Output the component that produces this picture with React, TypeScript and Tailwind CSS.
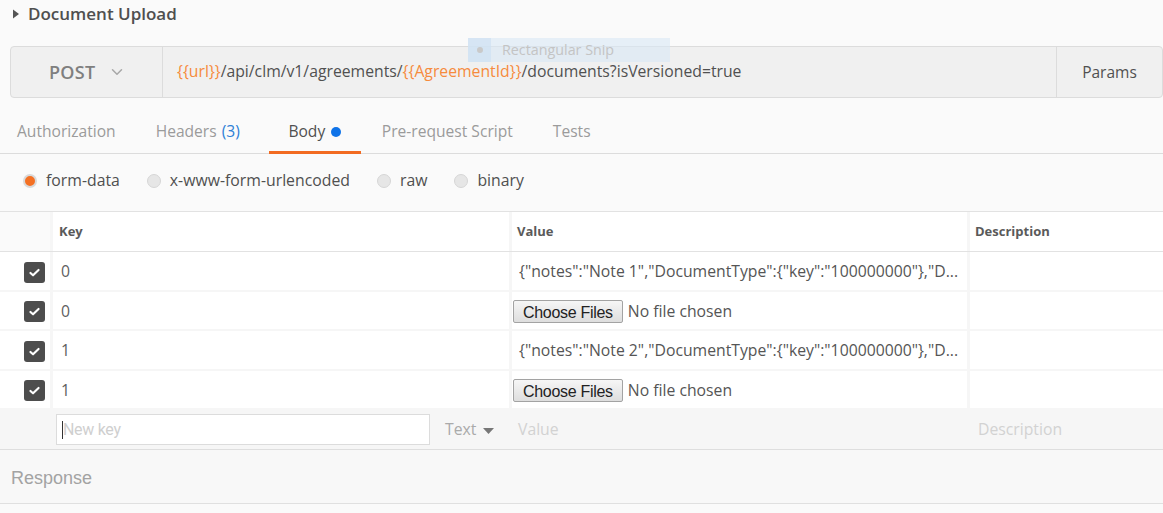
import React from 'react';
import { ChevronDown } from 'lucide-react';

const rows = [
  { key: '0', type: 'text', value: '{"notes":"Note 1","DocumentType":{"key":"100000000"},"D...' },
  { key: '0', type: 'file' },
  { key: '1', type: 'text', value: '{"notes":"Note 2","DocumentType":{"key":"100000000"},"D...' },
  { key: '1', type: 'file' },
];

const Check = () => (
  <div className="w-[21px] h-[21px] rounded-[3px] bg-[#4d4d4d] flex items-center justify-center">
    <svg width="13" height="13" viewBox="0 0 16 16">
      <path d="M3 8.5l3.2 3L13 4.8" fill="none" stroke="#fff" strokeWidth="2.6" strokeLinecap="round" strokeLinejoin="round" />
    </svg>
  </div>
);

const Radio = ({ label, active }: { label: string; active?: boolean }) => (
  <label className="flex items-center mr-[27px]">
    <span
      className={`w-[14px] h-[14px] rounded-full border mr-[9px] ${
        active ? 'bg-[#f47023] border-[#d9d9d9] border-[2px]' : 'bg-[#e6e6e6] border-[#d6d6d6]'
      }`}
    />
    <span className="text-[15.8px] text-[#505050]">{label}</span>
  </label>
);

const App = () => {
  return (
    <div className="relative w-[1163px] h-[513px] overflow-hidden bg-[#fafafa] font-['Open_Sans',sans-serif] text-[#505050]">
      {/* request title */}
      <div className="h-[28px] flex items-center pl-[12px]">
        <svg width="8" height="10" viewBox="0 0 8 10" className="mr-[8px]">
          <path d="M1 0.5l6 4.5-6 4.5z" fill="#555" />
        </svg>
        <span className="text-[17px] font-semibold text-[#4f4f4f]">Document Upload</span>
      </div>

      {/* url bar */}
      <div className="mt-[18px] ml-[10px] w-[1153px] h-[52px] flex border border-[#dcdcdc] rounded-[4px] bg-[#f0f0f0]">
        <div className="w-[152px] flex items-center pl-[38px] border-r border-[#dcdcdc]">
          <span className="text-[18px] font-semibold text-[#7f7f7f] tracking-[0.3px]">POST</span>
          <ChevronDown className="ml-[12px] text-[#a8a8a8]" size={18} strokeWidth={2} />
        </div>
        <div className="flex-1 flex items-center pl-[14px] text-[15.75px] text-[#505050] border-r border-[#dcdcdc]">
          <span className="text-[#f68b3d]">{'{{url}}'}</span>
          <span>/api/clm/v1/agreements/</span>
          <span className="text-[#f68b3d]">{'{{AgreementId}}'}</span>
          <span>/documents?isVersioned=true</span>
        </div>
        <div className="w-[105px] flex items-center justify-center pt-[1px] text-[15.5px] text-[#505050]">Params</div>
      </div>

      {/* snipping tool overlay */}
      <div className="absolute left-[468px] top-[38px] w-[202px] h-[24px] flex bg-[#d9e8f5]/60">
        <div className="w-[23px] h-full bg-[#cfe1f2]/70 flex items-center justify-center">
          <span className="w-[6px] h-[6px] rounded-full bg-[#c9c9c9]" />
        </div>
        <span className="ml-[11px] text-[14.3px] leading-[24px] text-[#c4c4c4]">Rectangular Snip</span>
      </div>

      {/* tabs */}
      <div className="mt-[12px] h-[44px] flex border-b border-[#dcdcdc] text-[15.6px] text-[#9b9b9b]">
        <div className="px-[17px] flex items-center">Authorization</div>
        <div className="pl-[23px] pr-[23px] flex items-center">
          Headers <span className="ml-[5px] text-[#2d7fd6]">(3)</span>
        </div>
        <div className="relative ml-[6px] w-[92px] flex items-center justify-center text-[#505050]">
          Body <span className="ml-[6px] w-[10px] h-[10px] rounded-full bg-[#0f73e8]" />
          <span className="absolute left-0 right-0 bottom-[-1px] h-[3px] bg-[#f26b21]" />
        </div>
        <div className="pl-[21px] pr-[22px] flex items-center">Pre-request Script</div>
        <div className="pl-[18px] flex items-center">Tests</div>
      </div>

      {/* body modes */}
      <div className="h-[57px] flex items-center pl-[23px] pb-[4px]">
        <Radio label="form-data" active />
        <Radio label="x-www-form-urlencoded" />
        <Radio label="raw" />
        <Radio label="binary" />
      </div>

      {/* form-data table */}
      <div className="border-t border-[#e2e2e2]">
        <div className="flex h-[40px] border-b border-[#e2e2e2] text-[13px] font-bold text-[#5a5a5a]">
          <div className="w-[50px]" />
          <div className="w-[459px] border-l-[3px] border-[#f6f6f6] bg-white flex items-center pl-[6px] pt-[1px]">Key</div>
          <div className="w-[458px] border-l-[3px] border-[#f6f6f6] bg-white flex items-center pl-[5px] pt-[1px]">Value</div>
          <div className="flex-1 border-l-[3px] border-[#f6f6f6] bg-white flex items-center pl-[5px] pt-[1px]">Description</div>
        </div>

        {rows.map((row, i) => (
          <div key={i} className="flex h-[39.5px] border-b-2 border-[#f6f6f6] bg-white text-[15.75px]">
            <div className="w-[50px] flex items-center justify-end pr-[5px] pt-[3px]">
              <Check />
            </div>
            <div className="w-[459px] border-l-[3px] border-[#f6f6f6] flex items-center pl-[8px] pt-[3px] text-[#606060]">
              {row.key}
            </div>
            <div className="w-[458px] border-l-[3px] border-[#f6f6f6] flex items-center pl-[7px] pt-[3px]">
              {row.type === 'text' ? (
                <span className="whitespace-nowrap text-[15.75px] text-[#555]">{row.value}</span>
              ) : (
                <div className="flex items-center">
                  <button className="h-[23px] px-[9px] ml-[-6px] border border-[#a3a3a3] rounded-[2px] bg-gradient-to-b from-[#f6f6f6] to-[#dedede] text-[16px] text-[#222] font-['Liberation_Sans',sans-serif] tracking-[-0.3px]">
                    Choose Files
                  </button>
                  <span className="ml-[5px] text-[15.75px] text-[#555]">No file chosen</span>
                </div>
              )}
            </div>
            <div className="flex-1 border-l-[3px] border-[#f6f6f6]" />
          </div>
        ))}

        {/* new row */}
        <div className="flex h-[40px] bg-[#f6f6f6] border-b border-[#dedede] items-center text-[15.75px]">
          <div className="w-[56px]" />
          <div className="w-[374px] h-[31px] bg-white border border-[#dcdcdc] flex items-center pl-[5px]">
            <span className="w-px h-[18px] bg-[#333]" />
            <span className="text-[#cfcfcf] font-['Roboto',sans-serif] text-[16px] tracking-[-0.3px]">New key</span>
          </div>
          <div className="ml-[15px] w-[73px] flex items-center text-[#aaaaaa]">
            Text
            <svg width="11" height="6" viewBox="0 0 11 6" className="ml-[7px] mt-[2px]">
              <path d="M0 0h11L5.5 6z" fill="#777" />
            </svg>
          </div>
          <span className="w-[460px] text-[#d2d2d2]">Value</span>
          <span className="text-[#d2d2d2]">Description</span>
        </div>

        {/* response */}
        <div className="h-[54px] bg-[#f8f8f8] border-b border-[#e0e0e0] flex items-center pl-[11px] pt-[3px]">
          <span className="text-[18px] text-[#a3a3a3] font-['Liberation_Sans',sans-serif]">Response</span>
        </div>
      </div>
    </div>
  );
};

export default App;
